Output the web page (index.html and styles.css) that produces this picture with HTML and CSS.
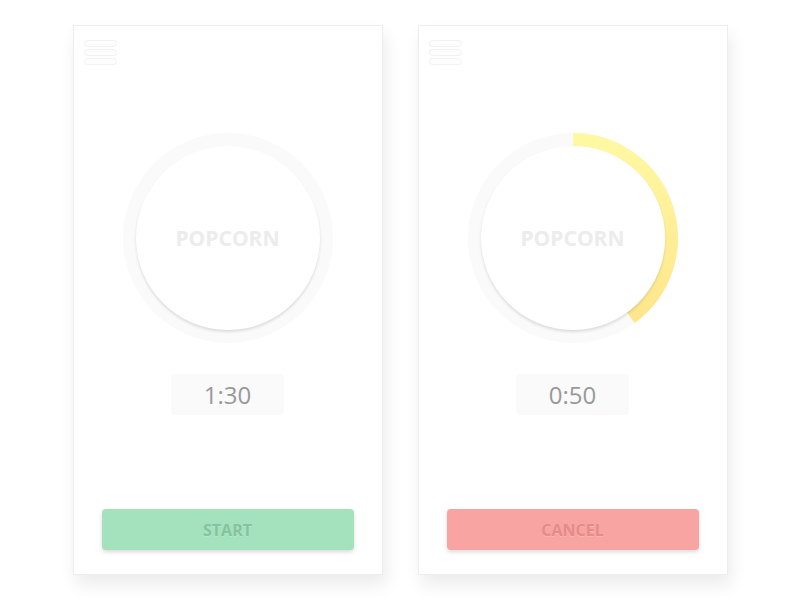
FILE: index.html
```
<!DOCTYPE html>
<html lang="en">
<head>
    <meta charset="UTF-8">
    <title>Popcorn Timer</title>
    <link rel="stylesheet" href="styles.css">
</head>
<body>
    <div class="screen">
        <div class="menu">
            <span class="menu-bar"></span>
            <span class="menu-bar"></span>
            <span class="menu-bar"></span>
        </div>
        <div class="dial">
            <div class="dial-face">POPCORN</div>
        </div>
        <div class="time">1:30</div>
        <button class="btn btn-start">START</button>
    </div>

    <div class="screen">
        <div class="menu">
            <span class="menu-bar"></span>
            <span class="menu-bar"></span>
            <span class="menu-bar"></span>
        </div>
        <div class="dial">
            <svg class="progress" width="210" height="210" viewBox="0 0 210 210">
                <defs>
                    <linearGradient id="yellow" x1="0" y1="0" x2="0" y2="1">
                        <stop offset="0" stop-color="#fff8a3"/>
                        <stop offset="1" stop-color="#ffe68c"/>
                    </linearGradient>
                </defs>
                <!-- 40% of the ring, clockwise from the top -->
                <path d="M105 6.5 A98.5 98.5 0 0 1 162.9 184.7" fill="none" stroke="url(#yellow)" stroke-width="13"/>
            </svg>
            <div class="dial-face">POPCORN</div>
        </div>
        <div class="time">0:50</div>
        <button class="btn btn-cancel">CANCEL</button>
    </div>
</body>
</html>
```

FILE: styles.css
```
body {
    margin: 0;
    height: 600px;
    background: #fff;
    font-family: 'Open Sans', sans-serif;
    display: flex;
    justify-content: center;
    align-items: flex-start;
    gap: 35px;
    padding-top: 25px;
    box-sizing: border-box;
}
.screen {
    width: 310px;
    height: 550px;
    box-sizing: border-box;
    border: 1px solid #ededed;
    background: #fff;
    box-shadow: 3px 10px 16px rgba(0, 0, 0, 0.08);
    padding: 14px 28px 24px 28px;
    display: flex;
    flex-direction: column;
    align-items: center;
}
.menu {
    align-self: flex-start;
    margin-left: -18px;
    display: flex;
    flex-direction: column;
    gap: 2px;
}
.menu-bar {
    display: block;
    width: 31px;
    height: 5px;
    border: 1px solid #f2f2f2;
    border-radius: 4px;
    background: #fdfdfd;
}
.dial {
    position: relative;
    margin-top: 68px;
    width: 210px;
    height: 210px;
    border-radius: 50%;
    background: #fafafa;
    display: flex;
    justify-content: center;
    align-items: center;
}
.progress {
    position: absolute;
    top: 0;
    left: 0;
}
.dial-face {
    position: relative;
    width: 184px;
    height: 184px;
    border-radius: 50%;
    background: #fff;
    box-shadow: 0 2px 3px rgba(0, 0, 0, 0.12);
    display: flex;
    justify-content: center;
    align-items: center;
    font-size: 21px;
    font-weight: 700;
    color: #ececec;
}
.time {
    margin-top: 31px;
    width: 113px;
    height: 41px;
    border-radius: 4px;
    background: #fafafa;
    color: #999;
    font-size: 24px;
    line-height: 41px;
    text-align: center;
}
.btn {
    margin-top: auto;
    width: 252px;
    height: 41px;
    border: none;
    border-radius: 4px;
    font-family: 'Open Sans', sans-serif;
    font-size: 16px;
    font-weight: 700;
    box-shadow: 0 2px 4px rgba(0, 0, 0, 0.15);
    text-shadow: 0 1px 0 rgba(255, 255, 255, 0.2);
}
.btn-start {
    background: #a3e2bd;
    color: #86c29d;
}
.btn-cancel {
    background: #f8a4a2;
    color: #e58b8a;
}
```
